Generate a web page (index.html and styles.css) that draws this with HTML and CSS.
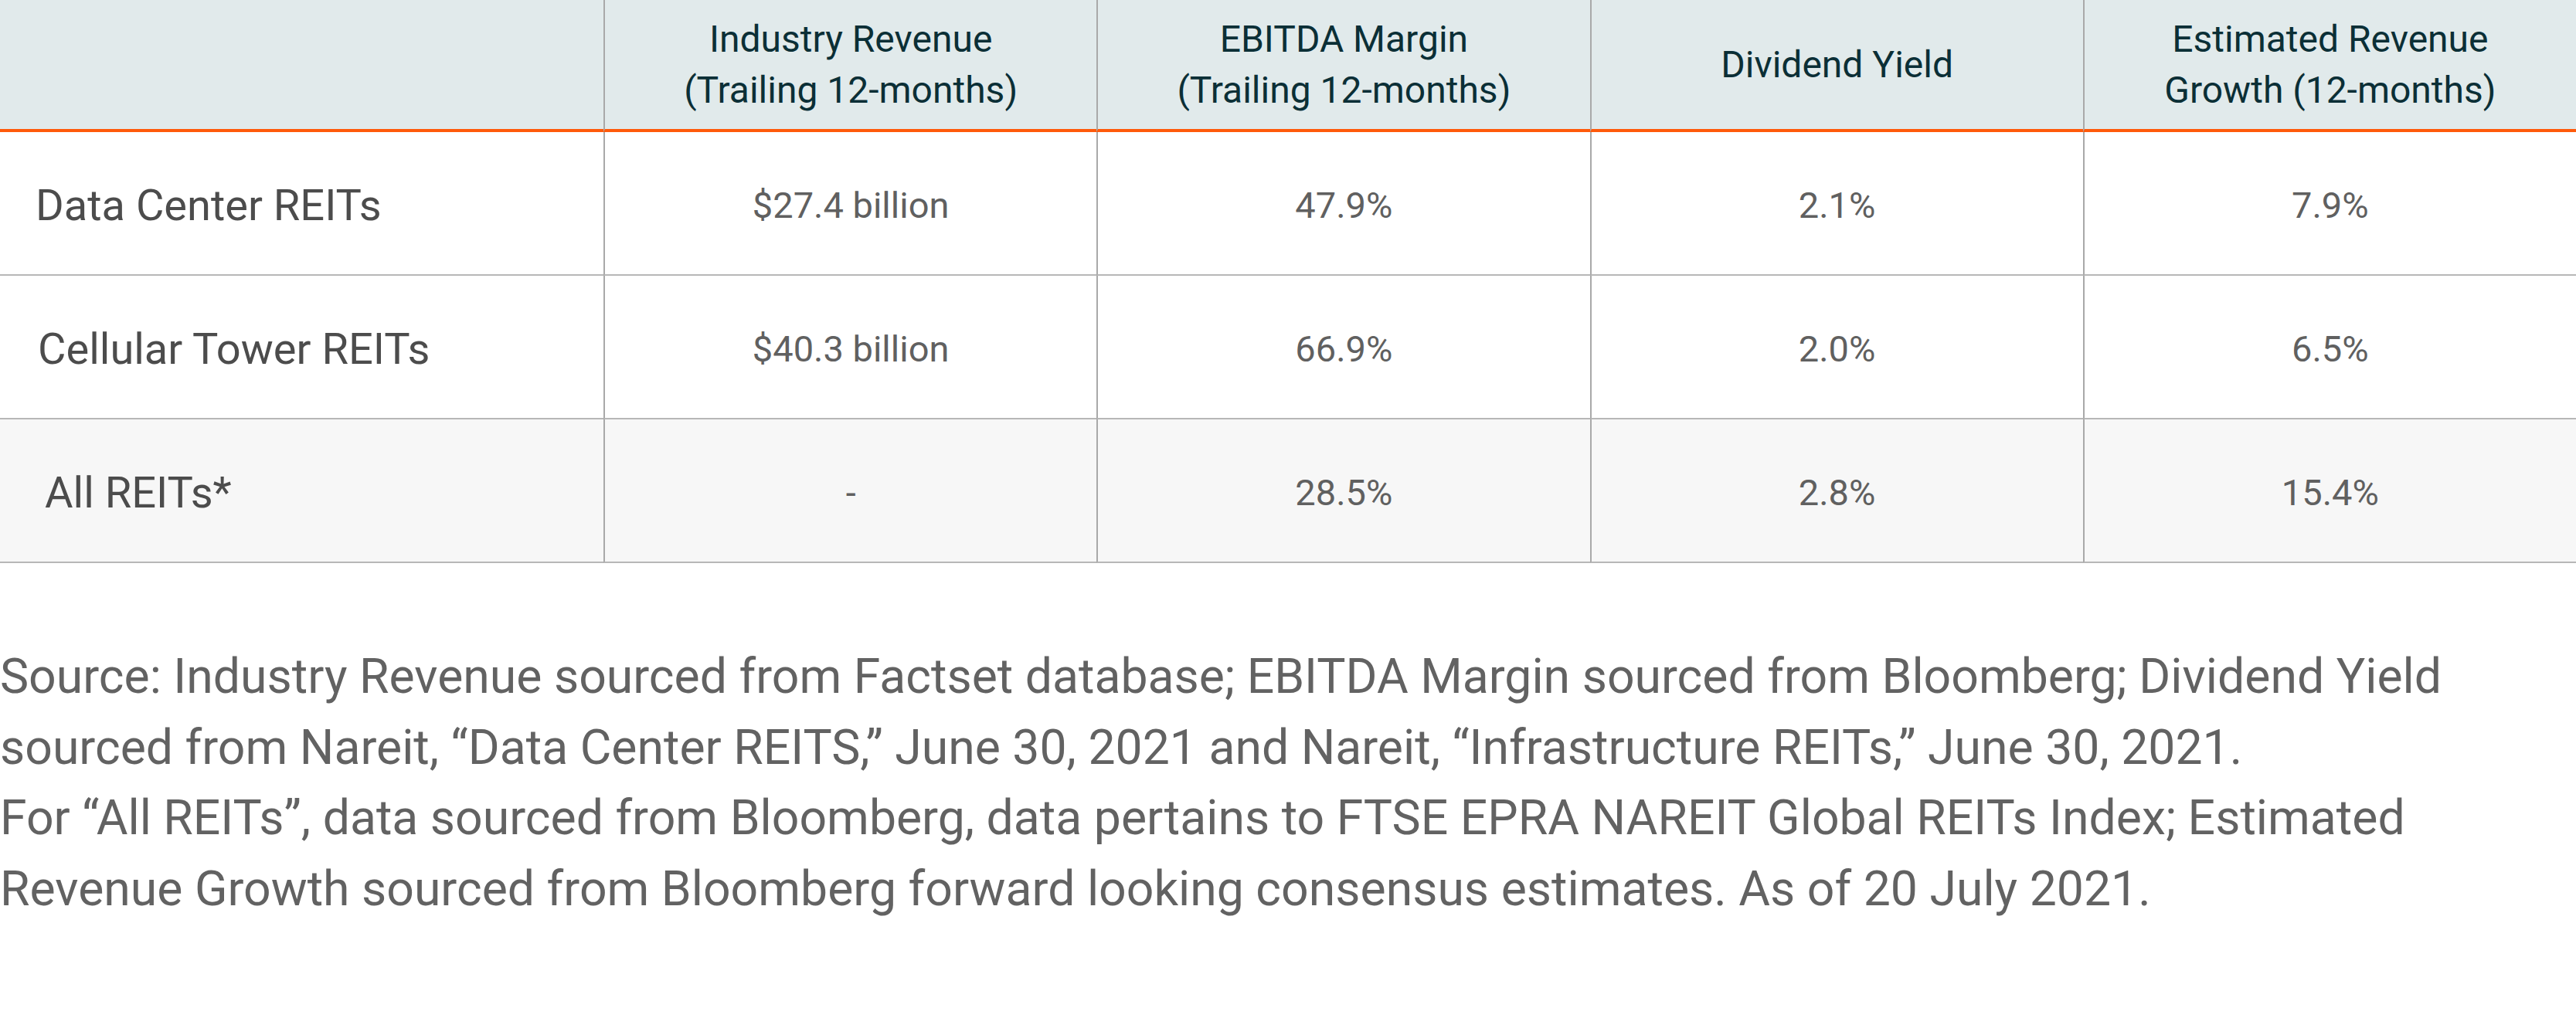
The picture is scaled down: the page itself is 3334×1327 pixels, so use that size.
FILE: index.html
```html
<!DOCTYPE html>
<html lang="en">
<head>
<meta charset="utf-8">
<title>REIT comparison</title>
<link rel="stylesheet" href="styles.css">
</head>
<body>
<table class="reit-table">
  <thead>
    <tr>
      <th class="col-label"></th>
      <th>Industry Revenue<br>(Trailing 12-months)</th>
      <th>EBITDA Margin<br>(Trailing 12-months)</th>
      <th>Dividend Yield</th>
      <th>Estimated Revenue<br>Growth (12-months)</th>
    </tr>
  </thead>
  <tbody>
    <tr>
      <td class="col-label pad-a">Data Center REITs</td>
      <td>$27.4 billion</td>
      <td>47.9%</td>
      <td>2.1%</td>
      <td>7.9%</td>
    </tr>
    <tr>
      <td class="col-label pad-b">Cellular Tower REITs</td>
      <td>$40.3 billion</td>
      <td>66.9%</td>
      <td>2.0%</td>
      <td>6.5%</td>
    </tr>
    <tr class="row-shaded">
      <td class="col-label pad-c">All REITs*</td>
      <td>-</td>
      <td>28.5%</td>
      <td>2.8%</td>
      <td>15.4%</td>
    </tr>
  </tbody>
</table>
<div class="notes">
  <p>Source: Industry Revenue sourced from Factset database; EBITDA Margin sourced from Bloomberg; Dividend Yield<br>sourced from Nareit, “Data Center REITS,” June 30, 2021 and Nareit, “Infrastructure REITs,” June 30, 2021.</p>
  <p>For “All REITs”, data sourced from Bloomberg, data pertains to FTSE EPRA NAREIT Global REITs Index; Estimated<br>Revenue Growth sourced from Bloomberg forward looking consensus estimates. As of 20 July 2021.</p>
</div>
</body>
</html>
```

FILE: styles.css
```css
html, body {
  margin: 0;
  padding: 0;
  background: #ffffff;
}

body {
  font-family: Roboto, "Liberation Sans", Arial, sans-serif;
  width: 3334px;
}

.reit-table {
  width: 3334px;
  border-collapse: separate;
  border-spacing: 0;
  table-layout: fixed;
}

.reit-table th,
.reit-table td {
  padding: 0;
  text-align: center;
  vertical-align: middle;
  border-left: 2px solid #a9a9a9;
}

.reit-table .col-label {
  border-left: none;
  width: 781px;
  text-align: left;
}

.reit-table th {
  height: 167px;
  background: #e1eaeb;
  border-bottom: 4px solid #ff5a0a;
  color: #0b2f36;
  font-weight: normal;
  font-size: 48px;
  line-height: 66px;
}

.reit-table td {
  height: 178px;
  padding-top: 6px;
  border-bottom: 2px solid #b7b7b7;
  color: #606060;
  font-size: 47px;
  line-height: 66px;
}

.reit-table td.col-label {
  color: #4c4c4c;
  font-size: 56px;
}

.reit-table td.pad-a { padding-left: 46px; }
.reit-table td.pad-b { padding-left: 49px; }
.reit-table td.pad-c { padding-left: 58px; }

.row-shaded td {
  background: #f7f7f7;
}

.notes {
  margin-top: 101px;
  color: #626262;
  font-size: 62.5px;
  line-height: 91.5px;
  white-space: nowrap;
}

.notes p {
  margin: 0;
}
```
